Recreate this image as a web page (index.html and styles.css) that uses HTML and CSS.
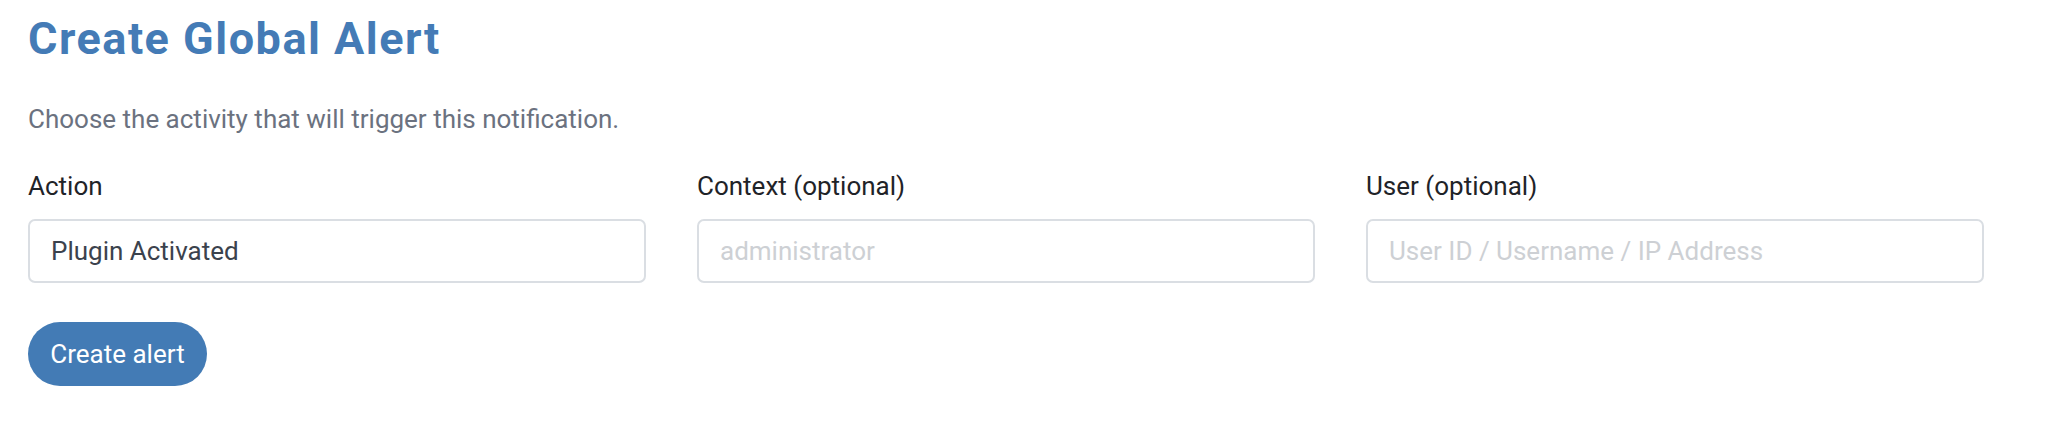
FILE: index.html
```html
<!DOCTYPE html>
<html lang="en">
<head>
<meta charset="utf-8">
<title>Create Global Alert</title>
<link rel="stylesheet" href="styles.css">
</head>
<body>
<main class="page">
  <h1 class="title">Create Global Alert</h1>
  <p class="lead">Choose the activity that will trigger this notification.</p>
  <form class="form">
    <div class="fields">
      <label class="field">
        <span class="label">Action</span>
        <input class="input" type="text" value="Plugin Activated">
      </label>
      <label class="field">
        <span class="label">Context (optional)</span>
        <input class="input" type="text" placeholder="administrator">
      </label>
      <label class="field">
        <span class="label">User (optional)</span>
        <input class="input" type="text" placeholder="User ID / Username / IP Address">
      </label>
    </div>
    <button class="btn" type="button">Create alert</button>
  </form>
</main>
</body>
</html>
```
FILE: styles.css
```css
* { box-sizing: border-box; }
html, body { margin: 0; background: #ffffff; }
body { font-family: Roboto, "Liberation Sans", sans-serif; }
.page { padding: 13px 64px 0 28px; width: 2048px; }
.title {
  margin: 0;
  font-size: 45px;
  line-height: 52px;
  font-weight: 700;
  letter-spacing: 1.5px;
  color: #447bb6;
}
.lead {
  margin: 38px 0 0;
  font-size: 26px;
  line-height: 32px;
  color: #6b7280;
}
.form { margin-top: 35px; }
.fields {
  display: grid;
  grid-template-columns: repeat(3, 618px);
  column-gap: 51px;
}
.field { display: flex; flex-direction: column; }
.label {
  font-size: 26px;
  line-height: 32px;
  color: #1f2328;
  margin-bottom: 17px;
}
.input {
  height: 64px;
  width: 100%;
  border: 2px solid #dadee3;
  border-radius: 7px;
  padding: 0 21px;
  font-family: inherit;
  font-size: 26px;
  color: #3b424d;
  background: #fff;
  outline: none;
}
.input::placeholder { color: #cdd0d4; }
.btn {
  margin-top: 39px;
  height: 64px;
  width: 179px;
  border: 0;
  border-radius: 32px;
  background: #437bb5;
  color: #fff;
  font-family: inherit;
  font-size: 26px;
  padding: 0;
}
```
